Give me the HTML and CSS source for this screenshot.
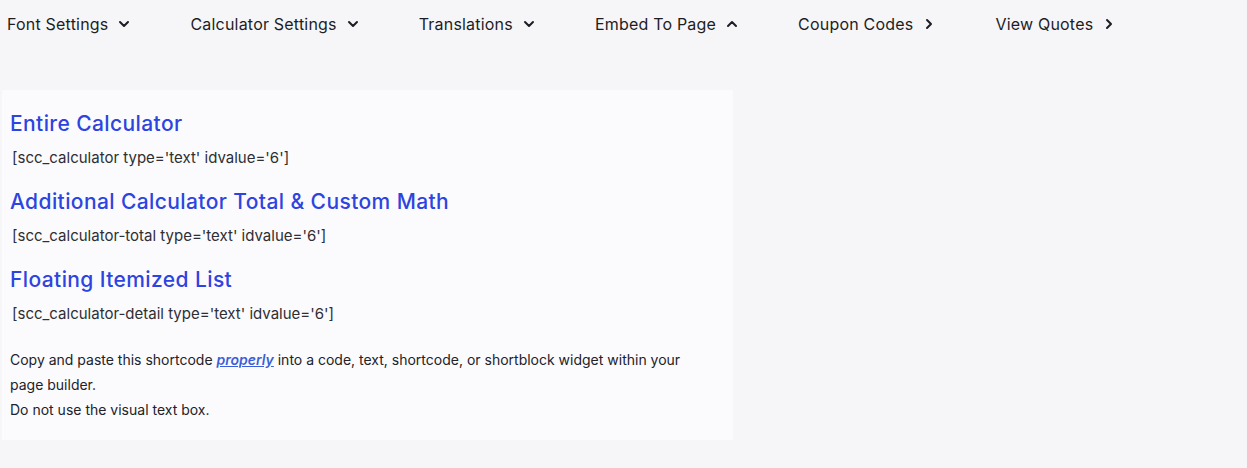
FILE: index.html
```html
<!DOCTYPE html>
<html lang="en">
<head>
<meta charset="utf-8">
<title>Embed To Page</title>
<link rel="stylesheet" href="styles.css">
</head>
<body>
<nav class="tabs">
  <div class="tab"><span>Font Settings</span><svg class="chev" viewBox="0 0 12 12"><path d="M2 4l4 4 4-4"/></svg></div>
  <div class="tab"><span>Calculator Settings</span><svg class="chev" viewBox="0 0 12 12"><path d="M2 4l4 4 4-4"/></svg></div>
  <div class="tab"><span>Translations</span><svg class="chev" viewBox="0 0 12 12"><path d="M2 4l4 4 4-4"/></svg></div>
  <div class="tab"><span>Embed To Page</span><svg class="chev" viewBox="0 0 12 12"><path d="M2 8l4-4 4 4"/></svg></div>
  <div class="tab"><span>Coupon Codes</span><svg class="chev" viewBox="0 0 12 12"><path d="M4 2l4 4-4 4"/></svg></div>
  <div class="tab"><span>View Quotes</span><svg class="chev" viewBox="0 0 12 12"><path d="M4 2l4 4-4 4"/></svg></div>
</nav>
<section class="panel">
  <h2 class="title">Entire Calculator</h2>
  <p class="code">[scc_calculator type='text' idvalue='6']</p>
  <h2 class="title">Additional Calculator Total &amp; Custom Math</h2>
  <p class="code">[scc_calculator-total type='text' idvalue='6']</p>
  <h2 class="title">Floating Itemized List</h2>
  <p class="code">[scc_calculator-detail type='text' idvalue='6']</p>
  <p class="note"><span>Copy and paste this shortcode</span> <a class="link" href="#">properly</a> <span>into a code, text, shortcode, or shortblock widget within your</span><br><span>page builder.</span><br><span>Do not use the visual text box.</span></p>
</section>
</body>
</html>
```
FILE: styles.css
```css
html, body {
  margin: 0;
  padding: 0;
}
body {
  background: #f6f6f9;
  font-family: Inter, "Open Sans", sans-serif;
  color: #1c1c22;
  width: 1247px;
  height: 468px;
  overflow: hidden;
}
.tabs {
  display: flex;
  align-items: center;
  gap: 60px;
  height: 48px;
  padding-left: 7px;
}
.tab {
  display: flex;
  align-items: center;
  gap: 10px;
  font-size: 16px;
  letter-spacing: 0.2px;
  color: #1d1d24;
}
.chev {
  width: 12px;
  height: 12px;
  fill: none;
  stroke: #1d1d24;
  stroke-width: 2;
  stroke-linecap: round;
  stroke-linejoin: round;
}
.panel {
  margin: 42px 0 0 2px;
  width: 723px;
  height: 310px;
  padding: 20px 0 20px 8px;
  background: #fbfbfe;
}
.title {
  margin: 0;
  font-size: 21px;
  line-height: 28px;
  font-weight: 500;
  letter-spacing: 0.4px;
  color: #2d44e0;
}
.code {
  margin: 8px 0 18px 2px;
  font-size: 15px;
  line-height: 24px;
  color: #2e2e33;
}
.note {
  margin: 21px 0 0;
  width: 700px;
  font-size: 14px;
  line-height: 25px;
  color: #222228;
}
.link {
  color: #3a5fd8;
  font-style: italic;
  font-weight: 600;
  text-decoration: underline;
}
```
